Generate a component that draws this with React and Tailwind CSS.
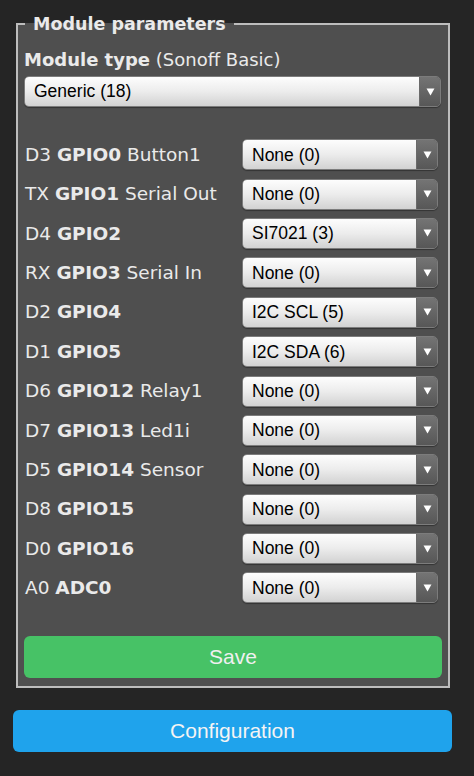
const rows = [
  ['D3', 'GPIO0', 'Button1', 'None (0)'],
  ['TX', 'GPIO1', 'Serial Out', 'None (0)'],
  ['D4', 'GPIO2', '', 'SI7021 (3)'],
  ['RX', 'GPIO3', 'Serial In', 'None (0)'],
  ['D2', 'GPIO4', '', 'I2C SCL (5)'],
  ['D1', 'GPIO5', '', 'I2C SDA (6)'],
  ['D6', 'GPIO12', 'Relay1', 'None (0)'],
  ['D7', 'GPIO13', 'Led1i', 'None (0)'],
  ['D5', 'GPIO14', 'Sensor', 'None (0)'],
  ['D8', 'GPIO15', '', 'None (0)'],
  ['D0', 'GPIO16', '', 'None (0)'],
  ['A0', 'ADC0', '', 'None (0)'],
];

const Select = ({ value, className = '' }) => (
  <div className={`flex h-[31px] rounded-[5px] overflow-hidden border border-[#7c7c7c] shadow-[0_1px_1px_rgba(0,0,0,0.35)] ${className}`}>
    <div className="flex-1 flex items-center pl-[9px] bg-linear-to-b from-[#fdfdfd] via-[#ececec] to-[#d2d2d2] text-black text-[17.5px] font-['Liberation_Sans',Arial,sans-serif]">
      {value}
    </div>
    <div className="w-[21px] flex items-center justify-center bg-linear-to-b from-[#747474] to-[#575757] border-l border-[#6a6a6a]">
      <svg width="9" height="8" viewBox="0 0 9 8">
        <path d="M0.5 0.5 H8.5 L4.5 7.5 Z" fill="#fff" />
      </svg>
    </div>
  </div>
);

export default function App() {
  return (
    <div className="min-h-screen w-full bg-[#252525] pl-[13px] pr-[22px] pt-[11px] pb-[24px] text-[#eaeaea] font-['DejaVu_Sans',Verdana,sans-serif]">
      <fieldset className="ml-[3px] mr-[2px] bg-[#4f4f4f] border-2 border-[#bdbdbd] px-[6px] pb-[8px]">
        <legend className="ml-[1px] px-[8px] text-[17.5px] font-bold leading-[26px]">Module parameters</legend>

        <div className="mt-[10px] text-[18px] leading-[26px]">
          <b>Module type</b> (Sonoff Basic)
        </div>
        <Select value="Generic (18)" className="mt-[3px] mr-[1px] h-[30px]" />

        <div className="mt-[28px]">
          {rows.map(([pin, gpio, fn, val]) => (
            <div key={gpio} className="flex items-center h-[39.4px]">
              <div className="w-[218px] pl-[1px] text-[18.5px] whitespace-nowrap">
                {pin} <b>{gpio}</b>{fn ? ` ${fn}` : ''}
              </div>
              <Select value={val} className="flex-1 mr-[4px]" />
            </div>
          ))}
        </div>

        <button className="mt-[28px] w-full h-[42px] rounded-[6px] bg-[#47c266] text-[#f0f0f0] text-[21px] font-['Liberation_Sans',Arial,sans-serif]">
          Save
        </button>
      </fieldset>

      <button className="mt-[22px] w-full h-[42px] rounded-[6px] bg-[#1fa3ec] text-[#f4f4f4] text-[21px] font-['Liberation_Sans',Arial,sans-serif]">
        Configuration
      </button>
    </div>
  );
}
